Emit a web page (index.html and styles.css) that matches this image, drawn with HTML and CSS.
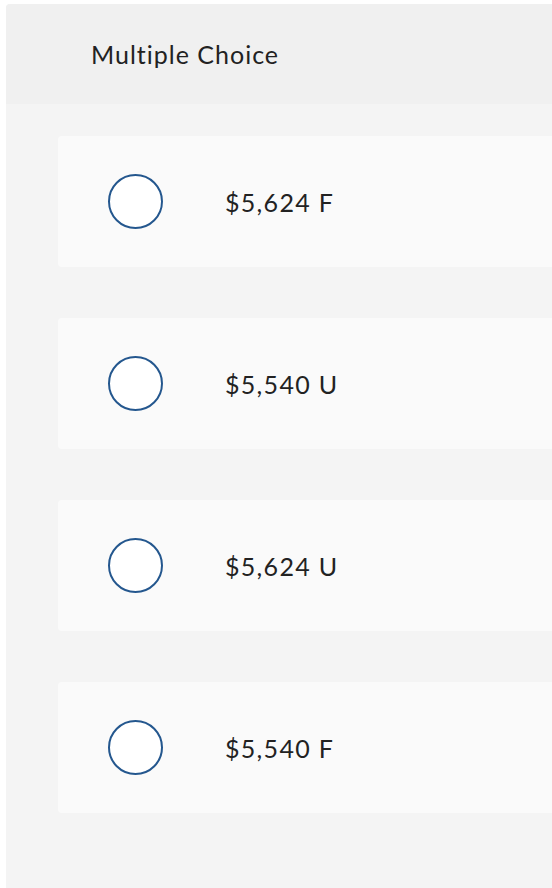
FILE: index.html
```html
<!DOCTYPE html>
<html>
<head>
<meta charset="utf-8">
<link rel="stylesheet" href="styles.css">
</head>
<body>
<div class="panel">
  <div class="header">Multiple Choice</div>
  <div class="choices">
    <div class="card"><span class="radio"></span><span class="label">$5,624 F</span></div>
    <div class="card"><span class="radio"></span><span class="label">$5,540 U</span></div>
    <div class="card"><span class="radio"></span><span class="label">$5,624 U</span></div>
    <div class="card"><span class="radio"></span><span class="label">$5,540 F</span></div>
  </div>
</div>
</body>
</html>
```
FILE: styles.css
```css
html, body {
  margin: 0;
  padding: 0;
  background: #ffffff;
  overflow: hidden;
}
body {
  width: 552px;
  height: 888px;
  font-family: Lato, "Liberation Sans", sans-serif;
  color: #222222;
}
.panel {
  margin: 4px 0 0 6px;
  width: 546px;
  height: 884px;
  background: #f4f4f4;
  border-radius: 4px 0 0 0;
  overflow: hidden;
}
.header {
  height: 100px;
  background: #f0f0f0;
  padding-left: 85px;
  display: flex;
  align-items: center;
  font-size: 25px;
  letter-spacing: 1px;
  color: #222222;
  box-sizing: border-box;
}
.choices {
  padding: 32px 0 0 52px;
  display: flex;
  flex-direction: column;
  gap: 51px;
}
.card {
  height: 131px;
  background: #fafafa;
  border-radius: 4px 0 0 4px;
  display: flex;
  align-items: center;
  padding-left: 50px;
}
.radio {
  width: 51px;
  height: 51px;
  border: 2px solid #24578e;
  border-radius: 50%;
  background: #ffffff;
  flex: none;
}
.label {
  margin-left: 62px;
  font-size: 25px;
  letter-spacing: 1.3px;
  color: #222222;
}
```
